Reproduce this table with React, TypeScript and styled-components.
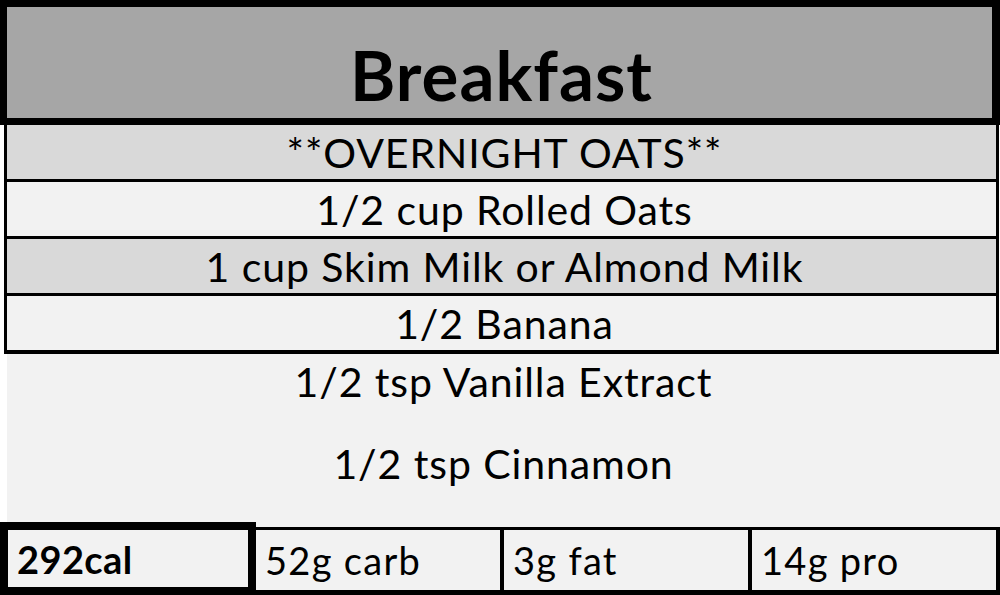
import React from "react";
import styled, { createGlobalStyle } from "styled-components";

const GlobalStyle = createGlobalStyle`
  html, body {
    margin: 0;
    padding: 0;
    background: #ffffff;
  }
  * {
    box-sizing: border-box;
  }
`;

const Sheet = styled.div`
  width: 1000px;
  height: 595px;
  display: flex;
  flex-direction: column;
  font-family: Lato, "Open Sans", sans-serif;
  color: #000000;
  overflow: hidden;
`;

const Header = styled.div`
  height: 125px;
  border: 7px solid #000000;
  border-right-width: 8px;
  background: #a6a6a6;
  display: flex;
  align-items: center;
  justify-content: center;
  padding-top: 24px;
`;

const Title = styled.h1`
  margin: 0 0 0 4px;
  font-size: 69px;
  font-weight: 700;
  line-height: 1;
  letter-spacing: 1px;
`;

const Rows = styled.div`
  margin: 0 1px 0 4px;
  display: flex;
  flex-direction: column;
`;

const Row = styled.div<{ shade: boolean; last?: boolean }>`
  height: ${props => (props.last ? 58 : 57)}px;
  border: 3px solid #000000;
  border-top: none;
  border-bottom-width: ${props => (props.last ? 4 : 3)}px;
  background: ${props => (props.shade ? "#d9d9d9" : "#f2f2f2")};
  display: flex;
  align-items: center;
  justify-content: center;
  font-size: 41px;
  letter-spacing: 0.9px;
  line-height: 1;
  padding-left: 6px;
`;

const Notes = styled.div`
  height: 168px;
  margin-left: 7px;
  background: #f2f2f2;
  display: flex;
  flex-direction: column;
  align-items: center;
  padding-top: 4px;
  gap: 34px;
  font-size: 41px;
  letter-spacing: 0.9px;
  line-height: 48px;
`;

const Note = styled.div`
  padding-left: 0;
`;

const Stats = styled.div`
  height: 73px;
  display: flex;
  background: #f2f2f2;
`;

const Stat = styled.div<{ main?: boolean }>`
  width: ${props => (props.main ? 256 : 248)}px;
  background: #f2f2f2;
  display: flex;
  align-items: center;
  font-size: 38px;
  letter-spacing: ${props => (props.main ? 0.4 : 1.3)}px;
  line-height: 1;
  font-weight: ${props => (props.main ? 700 : 400)};
  border: solid #000000;
  border-width: ${props => (props.main ? "8px" : "3px 4px 5px 0")};
  margin-top: ${props => (props.main ? 0 : 5)}px;
  padding-left: 9px;
`;

const ingredients = [
  "**OVERNIGHT OATS**",
  "1/2 cup Rolled Oats",
  "1 cup Skim Milk or Almond Milk",
  "1/2 Banana",
];

const App = () => {
  return (
    <>
      <GlobalStyle />
      <Sheet>
        <Header>
          <Title>Breakfast</Title>
        </Header>
        <Rows>
          {ingredients.map((item, i) => (
            <Row key={item} shade={i % 2 === 0} last={i === ingredients.length - 1}>
              {item}
            </Row>
          ))}
        </Rows>
        <Notes>
          <Note>1/2 tsp Vanilla Extract</Note>
          <Note>1/2 tsp Cinnamon</Note>
        </Notes>
        <Stats>
          <Stat main>292cal</Stat>
          <Stat>52g carb</Stat>
          <Stat>3g fat</Stat>
          <Stat>14g pro</Stat>
        </Stats>
      </Sheet>
    </>
  );
};

export default App;
